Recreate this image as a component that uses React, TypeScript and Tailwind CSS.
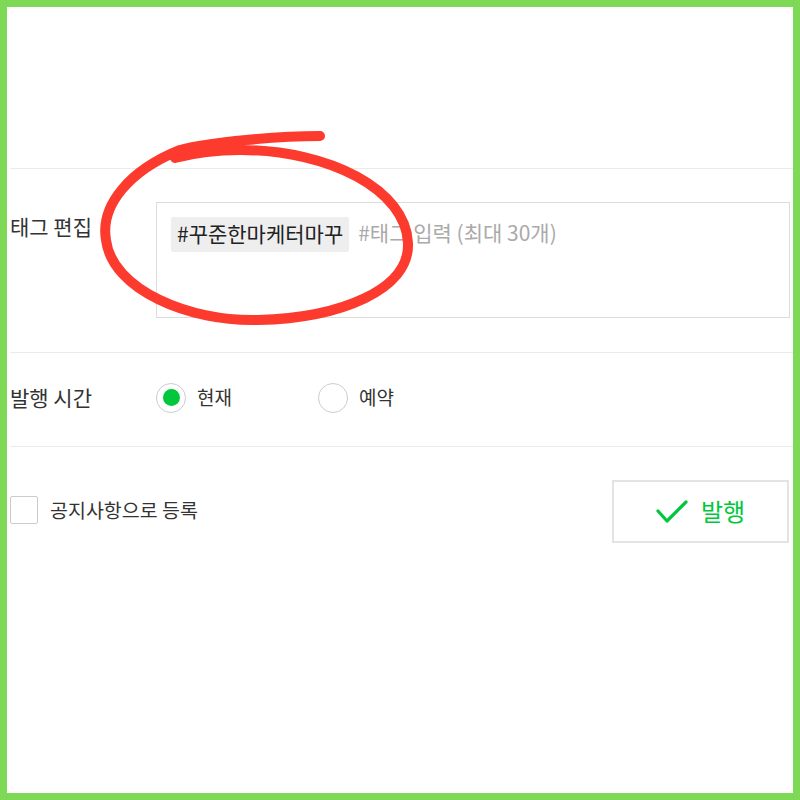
import { useState } from 'react';

const FONT = '"Noto Sans CJK KR", "Noto Sans", sans-serif';

function Radio({ checked, label, onClick }: { checked: boolean; label: string; onClick: () => void }) {
  return (
    <button type="button" onClick={onClick} className="flex items-center gap-[11px] w-[162px] shrink-0">
      <span className="w-[30px] h-[30px] rounded-full border-[1.5px] border-[#cccccc] flex items-center justify-center bg-white">
        {checked && <span className="w-[17px] h-[17px] rounded-full bg-[#00c73c]" />}
      </span>
      <span className="text-[19px] text-[#333]">{label}</span>
    </button>
  );
}

export default function App() {
  const [when, setWhen] = useState<'now' | 'reserve'>('now');
  const [notice, setNotice] = useState(false);

  return (
    <div
      className="relative w-[800px] h-[800px] bg-white border-[7px] border-[#7ed957] overflow-hidden"
      style={{ fontFamily: FONT }}
    >
      <div className="pl-[3px] pt-[161px]">
        {/* 태그 편집 */}
        <div className="flex border-t border-[#ebebeb] pt-[33px] pb-[34px]">
          <div className="w-[146px] shrink-0 pt-[10px] text-[21px] text-[#333] leading-[28px]">태그 편집</div>
          <div className="w-[634px] h-[116px] border border-[#dcdcdc] p-[14px] flex items-start gap-[9px]">
            <span className="h-[35px] px-[6px] bg-[#eeeeee] text-[21px] text-[#222] leading-[33px] rounded-[2px]">
              #꾸준한마케터마꾸
            </span>
            <input
              placeholder="#태그 입력 (최대 30개)"
              className="flex-1 h-[31px] bg-transparent text-[21px] text-[#333] placeholder:text-[#aaaaaa] focus:outline-none"
            />
          </div>
        </div>

        {/* 발행 시간 */}
        <div className="flex items-center h-[94px] pb-[4px] border-t border-[#ebebeb]">
          <div className="w-[146px] shrink-0 text-[21px] text-[#333]">발행 시간</div>
          <div className="flex items-center">
            <Radio checked={when === 'now'} label="현재" onClick={() => setWhen('now')} />
            <Radio checked={when === 'reserve'} label="예약" onClick={() => setWhen('reserve')} />
          </div>
        </div>

        {/* 공지사항 / 발행 */}
        <div className="flex items-center justify-between border-t border-[#ebebeb] pt-[33px] pr-[4px]">
          <button type="button" onClick={() => setNotice(!notice)} className="flex items-center gap-[12px] pb-[4px]">
            <span className="w-[28px] h-[28px] border-[1.5px] border-[#cccccc] rounded-[2px] bg-white flex items-center justify-center">
              {notice && (
                <svg className="w-4 h-4" viewBox="0 0 24 24" fill="none" stroke="#00c73c" strokeWidth={3}>
                  <path d="M4 12l5 5L20 6" />
                </svg>
              )}
            </span>
            <span className="text-[19.5px] text-[#333]">공지사항으로 등록</span>
          </button>
          <button
            type="button"
            className="w-[177px] h-[63px] border-2 border-[#e3e3e3] bg-white flex items-center justify-center gap-[13px]"
          >
            <svg className="w-[32px] h-[24px]" viewBox="0 0 32 24" fill="none" stroke="#00c73c" strokeWidth={3.2} strokeLinecap="round" strokeLinejoin="round">
              <path d="M2 11l9 10L30 2" />
            </svg>
            <span className="text-[24px] text-[#00c73c] leading-none pb-[2px]">발행</span>
          </button>
        </div>
      </div>

      {/* hand-drawn red circle annotation */}
      <svg className="absolute left-[-7px] top-[-7px] w-[800px] h-[800px] pointer-events-none" viewBox="0 0 800 800" fill="none">
        <path
          d="M 320 136 C 280 136, 210 142, 180 150 C 130 170, 100 205, 106 240 C 112 290, 190 322, 258 320 C 340 318, 410 290, 408 243 C 406 190, 330 150, 240 150 C 215 150, 190 154, 175 158"
          stroke="#fc3a2e"
          strokeWidth={10}
          strokeLinecap="round"
          strokeLinejoin="round"
        />
      </svg>
    </div>
  );
}
